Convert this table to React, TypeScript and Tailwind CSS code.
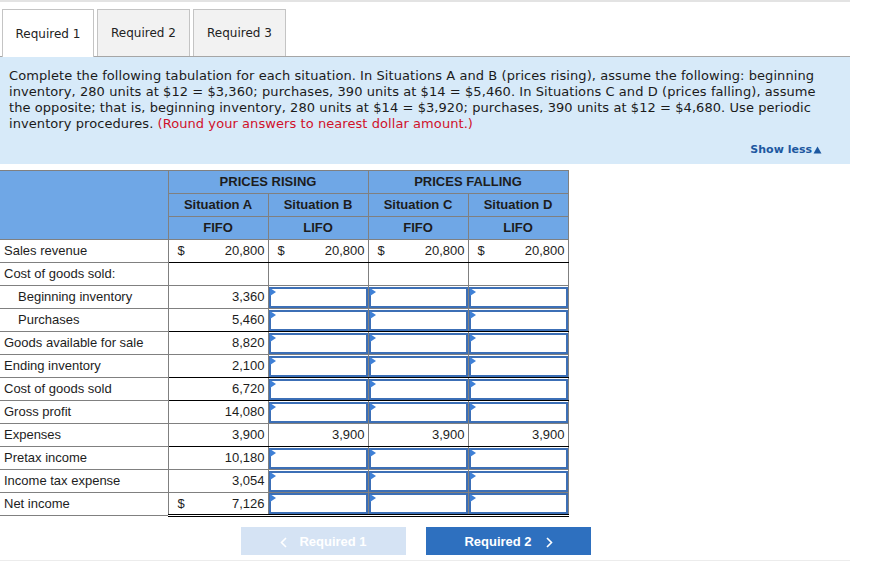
import React from "react"

type Row = {
  label: string
  indent?: boolean
  dollar?: boolean
  a: string
  rest: "input" | string | null
  rule?: "black" | "double"
}

const rows: Row[] = [
  { label: "Sales revenue", dollar: true, a: "20,800", rest: "20,800", rule: "black" },
  { label: "Cost of goods sold:", a: "", rest: null },
  { label: "Beginning inventory", indent: true, a: "3,360", rest: "input" },
  { label: "Purchases", indent: true, a: "5,460", rest: "input", rule: "black" },
  { label: "Goods available for sale", a: "8,820", rest: "input" },
  { label: "Ending inventory", a: "2,100", rest: "input", rule: "black" },
  { label: "Cost of goods sold", a: "6,720", rest: "input", rule: "black" },
  { label: "Gross profit", a: "14,080", rest: "input" },
  { label: "Expenses", a: "3,900", rest: "3,900", rule: "black" },
  { label: "Pretax income", a: "10,180", rest: "input" },
  { label: "Income tax expense", a: "3,054", rest: "input", rule: "black" },
  { label: "Net income", dollar: true, a: "7,126", rest: "input", rule: "double" },
]

function InputCell() {
  return (
    <div className="relative h-[21px] border-2 border-[#3c6fb6] bg-white">
      <span className="absolute -left-[1px] -top-[1px] w-0 h-0 border-t-[4px] border-b-[4px] border-l-[6px] border-t-transparent border-b-transparent border-l-[#3f80d6]" />
    </div>
  )
}

function ValueCell({ value, dollar }: { value: string; dollar?: boolean }) {
  return (
    <div className="flex items-center justify-between pl-[9px] pr-[3px]">
      <span>{dollar ? "$" : ""}</span>
      <span>{value}</span>
    </div>
  )
}

export default function App() {
  const ruleClass = (r?: Row["rule"]) =>
    r === "black" ? "border-b-black" : r === "double" ? "border-b-[3px] border-double border-b-black" : ""

  return (
    <div className="w-[871px] h-[564px] bg-white overflow-hidden">
      <div className="w-[850px]">
        <div className="h-[2px] bg-[#e3e3e3]" />

        {/* tabs */}
        <div className="flex gap-[3px] pl-[2px] pt-[7px] border-b border-[#a6a6a6] font-['DejaVu_Sans',sans-serif] text-[12px] text-[#222]">
          <div className="w-[92px] h-[48px] -mb-px bg-white border border-b-0 border-[#c4c4c4] flex items-center justify-center">
            Required 1
          </div>
          <div className="w-[93px] h-[47px] bg-[#f2f2f2] border border-b-0 border-[#c4c4c4] flex items-center justify-center">
            Required 2
          </div>
          <div className="w-[93px] h-[47px] bg-[#f2f2f2] border border-b-0 border-[#c4c4c4] flex items-center justify-center">
            Required 3
          </div>
        </div>

        {/* instructions */}
        <div className="bg-[#d7eaf9] pl-[9px] pr-[28px] pt-[11px] pb-[6px] font-['DejaVu_Sans',sans-serif] text-[13px] leading-[16px] tracking-[0.07px] text-[#1b1b1b]">
          <p>
            Complete the following tabulation for each situation. In Situations A and B (prices rising), assume the
            following: beginning inventory, 280 units at $12 = $3,360; purchases, 390 units at $14 = $5,460. In
            Situations C and D (prices falling), assume the opposite; that is, beginning inventory, 280 units at $14 =
            $3,920; purchases, 390 units at $12 = $4,680. Use periodic inventory procedures.{" "}
            <span className="text-[#d0112b]">(Round your answers to nearest dollar amount.)</span>
          </p>
          <div className="flex justify-end mt-[10px] tracking-normal">
            <span className="font-bold text-[11px] text-[#1d58a0] flex items-center gap-[1px]">
              Show less
              <svg width="9" height="8" viewBox="0 0 9 8">
                <path d="M4.5 0.5 L8.5 7.5 L0.5 7.5 Z" fill="#1d58a0" />
              </svg>
            </span>
          </div>
        </div>

        {/* table */}
        <table className="mt-[6px] border-collapse table-fixed w-[568px] font-['Liberation_Sans',Arial,sans-serif] text-[13px] text-[#1d1d1d]">
          <colgroup>
            <col className="w-[168px]" />
            <col className="w-[100px]" />
            <col className="w-[100px]" />
            <col className="w-[100px]" />
            <col className="w-[100px]" />
          </colgroup>
          <thead className="bg-[#6fa7e6] font-bold">
            <tr className="h-[23px]">
              <th rowSpan={3} className="border border-[#808080] border-l-0" />
              <th colSpan={2} className="border border-[#808080] font-bold">PRICES RISING</th>
              <th colSpan={2} className="border border-[#808080] font-bold">PRICES FALLING</th>
            </tr>
            <tr className="h-[23px]">
              <th className="border border-[#808080] font-bold">Situation A</th>
              <th className="border border-[#808080] font-bold">Situation B</th>
              <th className="border border-[#808080] font-bold">Situation C</th>
              <th className="border border-[#808080] font-bold">Situation D</th>
            </tr>
            <tr className="h-[23px]">
              <th className="border border-[#808080] font-bold">FIFO</th>
              <th className="border border-[#808080] font-bold">LIFO</th>
              <th className="border border-[#808080] font-bold">FIFO</th>
              <th className="border border-[#808080] font-bold">LIFO</th>
            </tr>
          </thead>
          <tbody>
            {rows.map((r, i) => (
              <tr key={i} className="h-[23px]">
                <td className={`border border-[#808080] border-l-0 p-0 ${r.indent ? "pl-[18px]" : "pl-[4px]"}`}>
                  {r.label}
                </td>
                <td className={`border border-[#808080] p-0 ${ruleClass(r.rule)}`}>
                  <ValueCell value={r.a} dollar={r.dollar} />
                </td>
                {[0, 1, 2].map((k) => (
                  <td key={k} className={`border border-[#808080] p-0 ${ruleClass(r.rule)}`}>
                    {r.rest === "input" ? (
                      <InputCell />
                    ) : r.rest ? (
                      <ValueCell value={r.rest} dollar={r.dollar} />
                    ) : null}
                  </td>
                ))}
              </tr>
            ))}
          </tbody>
        </table>

        {/* navigation */}
        <div className="flex gap-[20px] pl-[241px] mt-[10px] font-['Liberation_Sans',Arial,sans-serif] text-[13px] font-bold text-white">
          <button className="w-[165px] h-[28px] bg-[#d5e3f4] flex items-center justify-center gap-[12px] pt-[2px]">
            <svg width="7" height="11" viewBox="0 0 7 11">
              <path d="M6 1 L1.5 5.5 L6 10" stroke="white" strokeWidth="1.6" fill="none" />
            </svg>
            Required 1
          </button>
          <button className="w-[165px] h-[28px] bg-[#2e70bf] flex items-center justify-center gap-[14px] pt-[2px]">
            Required 2
            <svg width="7" height="11" viewBox="0 0 7 11">
              <path d="M1 1 L5.5 5.5 L1 10" stroke="white" strokeWidth="1.6" fill="none" />
            </svg>
          </button>
        </div>
        <div className="mt-[5px] h-px bg-[#ececec]" />
      </div>
    </div>
  )
}
